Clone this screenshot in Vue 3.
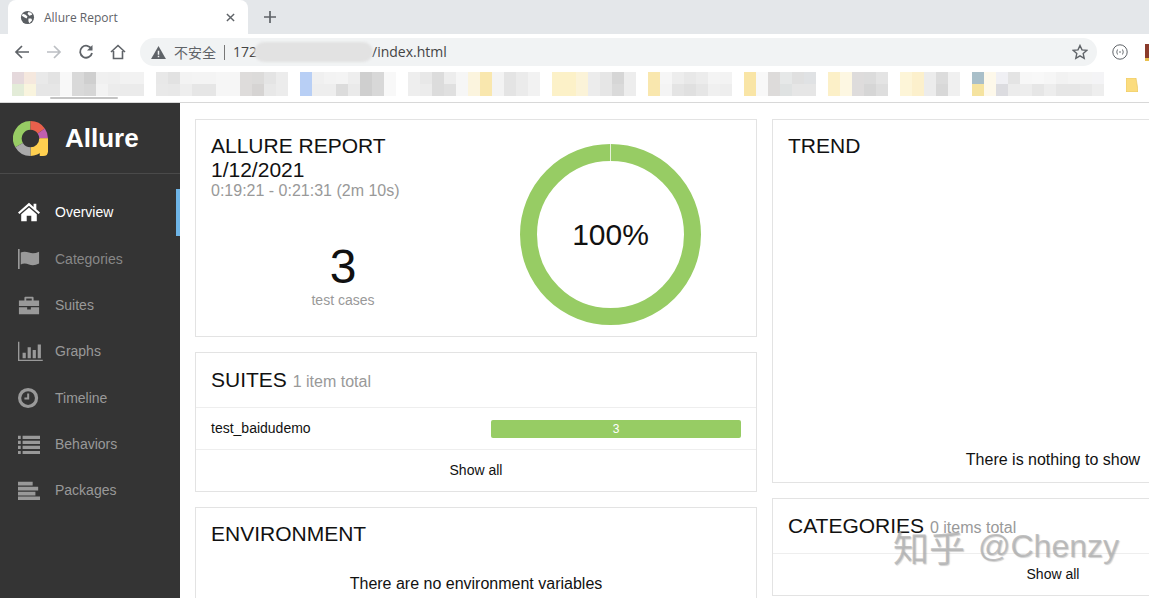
<script setup>
const bookmarkGroups = [
  ["e5d9dc/e3ecd8", "f5e8de/f9f4de", "e9e9e9/e6e6e6", "e3e3e3/e6e6e6", "f8f8f8/f8f8f8", "d9d9d9/d9d9d9", "cfcfcf/d6d6d6", "f0f0f0/f3f3f3", "efefef/ececec", "f2f2f2/ebebeb", "f2f2f2/ebebeb"],
  ["e8e8e8/e9e9e9", "e2e2e2/e8e8e8", "f3f3f3/eeeeee", "f4f4f4/e6e6e6", "f4f4f4/e6e6e6", "f6f6f6/f6f6f6", "f6f6f6/f6f6f6", "dedcdb/dedcdb", "dcdbda/d6d4d3", "e4e4e4/e8e8e8", "ececec/ececec"],
  ["b8cff5/b8cff5", "f0f0f0/eeeeee", "f3f3f3/eeeeee", "f4f4f4/dcdcdc", "eeeeee/eaeaea", "cfcfcf/cfcfcf", "d8d8d8/d8d8d8", "f8f8f8/f8f8f8"],
  ["eeeeee/eeeeee", "e8e8e8/ececec", "dcdcdc/dcdcdc", "ededed/e0e0e0", "f6f6f6/f6f6f6", "fbf4de/fbf4de", "f9e7ae/f9e7ae", "f3f3f3/f3f3f3", "e4e4e4/e4e4e4", "ebebeb/ebebeb", "f2f2f2/f2f2f2"],
  ["fcf1c8/fcf1c8", "fcf1c8/fcf1c8", "fbf3d8/fbf3d8", "ececec/ececec", "e6e6e6/e6e6e6", "d6d6d6/dadada", "ededed/ededed"],
  ["f9e7ae/f9e7ae", "f6f6f6/f4f4f4", "ededed/e4e4e4", "e8e8e8/e0e0e0", "ececec/e6e6e6", "f4f4f4/f0f0f0", "f3f3f3/eeeeee"],
  ["f9e5a6/f9e5a6", "f8f8f8/f8f8f8", "dddbda/dddbda", "e6e8e8/dfe2e2", "e0e0e0/e6e6e6", "e0e2e4/e6e6e6"],
  ["fcf0c8/fcf0c8", "fdf7e2/fdf7e2", "dedcdc/dedcdc", "dcdcdc/d6d6d6", "e4e4e4/dedede"],
  ["fdf5d8/fdf5d8", "fcf0cc/fcf0cc", "ececec/ececec", "dcdcdc/d8d8d8", "f0f0f0/f0f0f0"],
  ["a9bfc9/f5e3a0", "fdf8ea/fdf8ea", "f0f0f4/dcdce0", "e4e4e4/ececec", "f7f7f7/ededed", "f8f8f8/e6e6e6", "f6f6f6/ededed", "f2f2f2/e6e6e6", "f4f4f4/e6e6e6", "f4f4f4/e8e8e8", "f4f4f6/eeeeee"],
];

const navItems = [
  { label: "Overview", icon: "home", active: true },
  { label: "Categories", icon: "flag" },
  { label: "Suites", icon: "case" },
  { label: "Graphs", icon: "chart" },
  { label: "Timeline", icon: "clock" },
  { label: "Behaviors", icon: "list" },
  { label: "Packages", icon: "bars" },
];
</script>

<template>
  <div class="page">
    <div class="tabstrip">
      <div class="tab">
        <svg class="favicon" viewBox="0 0 16 16">
          <circle cx="8" cy="8" r="7" fill="#5a5e62" />
          <path d="M3 4l3 1 2 2-1 2-2-1-3-2zM9 2l3 1 1 2-3 1-2-2zM9 9l3 0 1 2-3 3-1-2z" fill="#fff" />
        </svg>
        <span class="tab-title">Allure Report</span>
        <svg class="tab-close" viewBox="0 0 10 10">
          <path d="M1 1l8 8M9 1l-8 8" stroke="#5f6368" stroke-width="1.6" fill="none" />
        </svg>
      </div>
      <svg class="new-tab" viewBox="0 0 12 12">
        <path d="M6 0v12M0 6h12" stroke="#5f6368" stroke-width="1.7" fill="none" />
      </svg>
    </div>

    <div class="toolbar">
      <svg class="tool" viewBox="0 0 16 16">
        <path d="M15 8H2M8 2L2 8l6 6" stroke="#5f6368" stroke-width="1.7" fill="none" />
      </svg>
      <svg class="tool" viewBox="0 0 16 16">
        <path d="M1 8h13M8 2l6 6-6 6" stroke="#bcbfc3" stroke-width="1.7" fill="none" />
      </svg>
      <svg class="tool" viewBox="0 0 16 16">
        <path d="M13.5 5A6 6 0 1 0 14 9" stroke="#5f6368" stroke-width="1.8" fill="none" />
        <path d="M14.5 1v5.5H9z" fill="#5f6368" />
      </svg>
      <svg class="tool" viewBox="0 0 16 16">
        <path d="M1 8l7-6.5L15 8M3.5 7v7.5h9V7" stroke="#5f6368" stroke-width="1.6" fill="none" />
      </svg>
      <div class="omnibox">
        <svg class="warn" viewBox="0 0 16 14">
          <path d="M8 0l8 14H0z" fill="#5f6368" />
          <path d="M7.2 5h1.6v4.4H7.2zM7.2 10.4h1.6V12H7.2z" fill="#f1f3f4" />
        </svg>
        <span class="insecure">不安全</span>
        <span class="divider"></span>
        <span class="url">172</span>
        <span class="url-blur"></span>
        <span class="url">/index.html</span>
        <svg class="star" viewBox="0 0 16 16">
          <path d="M8 1.500l2 4.400 4.700.5-3.500 3.200 1 4.700L8 11.900l-4.200 2.400 1-4.700L1.300 6.400 6 5.900z" stroke="#5f6368" stroke-width="1.400" fill="none" />
        </svg>
      </div>
      <svg class="ext" viewBox="0 0 16 16">
        <circle cx="8" cy="8" r="7.200" stroke="#5f6368" stroke-width="1" fill="none" />
        <path d="M5.500 5.500Q4 8 5.500 10.500M10.500 5.500Q12 8 10.500 10.500M7 8h2" stroke="#5f6368" stroke-width="0.900" fill="none" />
      </svg>
      <span class="ext-color"></span>
    </div>

    <div class="bookmarks">
      <div v-for="(group, i) in bookmarkGroups" :key="i" class="mosaic">
        <span
          v-for="(cell, j) in group"
          :key="j"
          class="cell"
          :style="{ background: `linear-gradient(#${cell.split('/')[0]} 50%, #${cell.split('/')[1]} 50%)` }"
        ></span>
      </div>
      <svg class="folder" viewBox="0 0 12 14">
        <path d="M0 0h10l2 12v2H0z" fill="#fbdc7e" stroke="#e6c35c" stroke-width="0.600" />
      </svg>
      <span class="smudge"></span>
    </div>

    <div class="app">
      <aside class="side">
        <div class="brand">
          <svg class="logo" viewBox="0 0 36 36">
            <g fill="none" stroke-width="9">
              <path d="M6.300 24.750A13.500 13.500 0 0 1 18 4.500" stroke="#97cc64" />
              <path d="M18 4.500A13.500 13.500 0 0 1 29.060 10.250" stroke="#e8604c" />
              <path d="M29.060 10.250A13.500 13.500 0 0 1 31.500 18" stroke="#c15fb0" />
              <path d="M31.500 18A13.500 13.500 0 0 1 18 31.500" stroke="#ffd050" />
              <path d="M18 31.500A13.500 13.500 0 0 1 6.300 24.750" stroke="#aaaaaa" />
            </g>
            <path d="M27.500 18h8.500v13q0 5-5 5h-3.500z" fill="#ffd050" />
          </svg>
          <span class="brand-name">Allure</span>
        </div>
        <nav class="nav">
          <a v-for="item in navItems" :key="item.label" class="nav-item" :class="{ active: item.active, dim: item.icon === 'flag' }">
            <svg class="nav-icon" viewBox="0 0 24 24">
              <template v-if="item.icon === 'home'">
                <path d="M12 2L0 12.500l1.500 1.800L12 5.200l10.500 9.100 1.500-1.800-4-3.500V3h-3v3.500z" />
                <path d="M12 7L3.500 14.500V22h6v-6h5v6h6v-7.500z" />
              </template>
              <template v-else-if="item.icon === 'flag'">
                <path d="M0 1h1.800v22H0z" />
                <path d="M3 5q4-2 9 0t11-1v13q-6 3-11 1t-9 0z" />
              </template>
              <template v-else-if="item.icon === 'case'">
                <path d="M8 3h8a1 1 0 0 1 1 1v3h6v6H1V7h6V4a1 1 0 0 1 1-1zm1 2v2h6V5z" />
                <path d="M1 14.500h9V17h4v-2.500h9V22H1z" />
              </template>
              <template v-else-if="item.icon === 'chart'">
                <path d="M0 2h1.500v19.500H27V23H0z" />
                <path d="M5 14h3.500v6H5zM10.500 8h3.500v12h-3.500zM16 11h3.500v9H16zM21.500 5H25v15h-3.500z" />
              </template>
              <template v-else-if="item.icon === 'clock'">
                <path fill-rule="evenodd" d="M11 1a11 11 0 1 0 0 22 11 11 0 0 0 0-22zm0 3.500a7.500 7.500 0 1 1 0 15 7.500 7.500 0 0 1 0-15z" />
                <path d="M10 7h2.200v6.500H7v-2h3z" />
              </template>
              <template v-else-if="item.icon === 'list'">
                <path d="M0 3h3v3.500H0zM5 3h19v3.500H5zM0 8.500h3V12H0zM5 8.500h19V12H5zM0 14h3v3.500H0zM5 14h19v3.500H5zM0 19.500h3V23H0zM5 19.500h19V23H5z" />
              </template>
              <template v-else>
                <path d="M0 3h16v4H0zM0 8.500h22v4H0zM0 14h19v4H0zM0 19h24v4H0z" />
              </template>
            </svg>
            <span>{{ item.label }}</span>
          </a>
        </nav>
      </aside>

      <main class="content">
        <div class="column">
          <section class="card summary">
            <div class="summary-left">
              <h2 class="title">ALLURE REPORT<br />1/12/2021</h2>
              <div class="time">0:19:21 - 0:21:31 (2m 10s)</div>
              <div class="count">3</div>
              <div class="count-label">test cases</div>
            </div>
            <div class="summary-right">
              <div class="donut"><span>100%</span></div>
            </div>
          </section>

          <section class="card">
            <div class="head"><h2 class="title">SUITES <small>1 item total</small></h2></div>
            <div class="row">
              <span class="row-name">test_baidudemo</span>
              <div class="bar">3</div>
            </div>
            <div class="show-all">Show all</div>
          </section>

          <section class="card env">
            <h2 class="title">ENVIRONMENT</h2>
            <p class="empty">There are no environment variables</p>
          </section>
        </div>

        <div class="column">
          <section class="card trend">
            <h2 class="title">TREND</h2>
            <p class="nothing">There is nothing to show</p>
          </section>
          <section class="card">
            <div class="head"><h2 class="title">CATEGORIES <small>0 items total</small></h2></div>
            <div class="show-all">Show all</div>
          </section>
        </div>
      </main>
    </div>

    <div class="watermark"><span class="wm-cjk">知乎</span><span class="wm-latin">@Chenzy</span></div>
  </div>
</template>

<style scoped>
.page {
  position: relative;
  width: 1149px;
  height: 598px;
  overflow: hidden;
  font-family: "Liberation Sans", Arial, sans-serif;
  color: #111;
  background: #fff;
}

.tabstrip {
  display: flex;
  align-items: center;
  height: 34px;
  padding-left: 8px;
  background: #e4e7ea;
}

.tab {
  display: flex;
  align-items: center;
  box-sizing: border-box;
  width: 240px;
  height: 34px;
  padding: 0 12px;
  background: #fff;
  border-radius: 8px 8px 0 0;
}

.favicon {
  width: 15px;
  height: 15px;
}

.tab-title {
  flex: 1;
  margin-left: 9px;
  font-family: "Open Sans", sans-serif;
  font-size: 12px;
  color: #5f6368;
}

.tab-close {
  width: 9px;
  height: 9px;
  margin-right: 1px;
}

.new-tab {
  width: 12px;
  height: 12px;
  margin-left: 16px;
}

.toolbar {
  display: flex;
  align-items: center;
  box-sizing: border-box;
  height: 34px;
  padding: 2px 0 0 14px;
  background: #fff;
}

.tool {
  flex: none;
  width: 16px;
  height: 16px;
  margin-right: 16px;
}

.omnibox {
  display: flex;
  flex: none;
  align-items: center;
  box-sizing: border-box;
  width: 957px;
  height: 28px;
  margin-left: -2px;
  padding-left: 11px;
  background: #f1f3f4;
  border-radius: 14px;
}

.warn {
  width: 15px;
  height: 13px;
}

.insecure {
  margin-left: 8px;
  font-family: "Noto Sans CJK SC", sans-serif;
  font-size: 14px;
  color: #5f6368;
}

.divider {
  width: 1px;
  height: 15px;
  margin: 0 8px;
  background: #777;
}

.url {
  margin-bottom: 2px;
  font-family: "Open Sans", sans-serif;
  font-size: 14px;
  color: #444;
}

.url-blur {
  width: 119px;
  height: 20px;
  margin: 0 -1px 0 -3px;
  background: #e2e2e2;
  border-radius: 10px;
  filter: blur(1px);
}

.star {
  width: 16px;
  height: 16px;
  margin-left: auto;
  margin-right: 9px;
}

.ext {
  flex: none;
  width: 16px;
  height: 16px;
  margin-left: 15px;
}

.ext-color {
  flex: none;
  width: 6px;
  height: 17px;
  margin-left: 17px;
  background: linear-gradient(#8a3b2b 85%, #e8c050 85%);
}

.bookmarks {
  position: relative;
  display: flex;
  align-items: flex-start;
  gap: 12px;
  box-sizing: border-box;
  height: 35px;
  padding: 4px 0 0 12px;
  background: #fff;
  border-bottom: 1px solid #d8d8d8;
}

.mosaic {
  display: flex;
  filter: blur(0.5px);
}

.cell {
  width: 12px;
  height: 24px;
}

.folder {
  width: 12px;
  height: 14px;
  margin: 6px 0 0 10px;
}

.smudge {
  position: absolute;
  left: 50px;
  top: 29px;
  width: 68px;
  height: 2px;
  background: #c4c4c4;
  border-radius: 2px;
  filter: blur(0.5px);
}

.app {
  display: flex;
  height: 495px;
}

.side {
  flex: none;
  width: 180px;
  background: #343434;
}

.brand {
  display: flex;
  align-items: center;
  height: 70px;
  padding-left: 13px;
  border-bottom: 1px solid #4a4a4a;
}

.logo {
  width: 35px;
  height: 35px;
}

.brand-name {
  margin-left: 17px;
  font-size: 26px;
  font-weight: 700;
  color: #fff;
}

.nav {
  display: flex;
  flex-direction: column;
  padding-top: 15.3px;
}

.nav-item {
  display: flex;
  align-items: center;
  box-sizing: border-box;
  height: 46.33px;
  padding-left: 18px;
  font-size: 14px;
  color: #999;
}

.nav-item.dim {
  color: #888;
}

.nav-item.active {
  color: #fff;
  border-right: 4px solid #6eb4e6;
}

.nav-icon {
  flex: none;
  width: 22px;
  height: 22px;
  margin-right: 15px;
  fill: #999;
  overflow: visible;
}

.nav-item.active .nav-icon {
  fill: #fff;
}

.content {
  flex: none;
  display: flex;
  gap: 15px;
  padding: 16px 0 0 15px;
}

.column {
  display: flex;
  flex-direction: column;
  gap: 15px;
  width: 562px;
}

.card {
  flex: none;
  box-sizing: border-box;
  border: 1px solid #e3e3e3;
  background: #fff;
}

.title {
  margin: 0;
  font-size: 21px;
  font-weight: 400;
  line-height: 24px;
  color: #111;
}

.title small {
  font-size: 16px;
  color: #999;
}

.summary {
  display: flex;
  height: 218px;
}

.summary-left {
  flex: none;
  width: 279px;
  padding: 14px 0 0 15px;
  box-sizing: border-box;
}

.time {
  font-size: 16px;
  line-height: 18px;
  color: #999;
}

.count {
  margin-top: 41px;
  font-size: 48px;
  line-height: 51px;
  text-align: center;
}

.count-label {
  font-size: 14px;
  line-height: 16px;
  color: #999;
  text-align: center;
}

.summary-right {
  display: flex;
  padding: 24px 0 0 45px;
}

.donut {
  position: relative;
  display: flex;
  align-items: center;
  justify-content: center;
  box-sizing: border-box;
  width: 181px;
  height: 181px;
  border: 17px solid #97cc64;
  border-radius: 50%;
  font-size: 30px;
  color: #111;
}

/* thin gap where the arc starts */
.donut::before {
  content: "";
  position: absolute;
  left: 72.5px;
  top: -17px;
  width: 1px;
  height: 17px;
  background: #e6f2da;
}

.head {
  height: 55px;
  padding: 15px 15px 0;
  box-sizing: border-box;
  border-bottom: 1px solid #eee;
}

.row {
  display: flex;
  align-items: center;
  justify-content: space-between;
  box-sizing: border-box;
  height: 42px;
  padding: 0 15px;
  border-bottom: 1px solid #eee;
  font-size: 14px;
}

.row-name {
  margin-bottom: 2px;
}

.bar {
  width: 250px;
  height: 18px;
  background: #97cc64;
  border-radius: 2px;
  color: #fff;
  font-size: 12px;
  line-height: 18px;
  text-align: center;
}

.show-all {
  height: 41px;
  font-size: 14px;
  line-height: 41px;
  text-align: center;
}

.env {
  height: 120px;
  padding: 14px 15px;
}

.empty {
  margin: 29px 0 0;
  font-size: 16px;
  line-height: 18px;
  text-align: center;
}

.trend {
  display: flex;
  flex-direction: column;
  height: 364px;
  padding: 14px 15px 13px;
}

.nothing {
  margin: auto 0 0;
  font-size: 16px;
  line-height: 18px;
  text-align: center;
}

.watermark {
  position: absolute;
  left: 893px;
  top: 524px;
  display: flex;
  align-items: center;
  gap: 13px;
  height: 44px;
  white-space: nowrap;
  color: rgba(175, 175, 175, 0.75);
  text-shadow: 1px 1px 1px rgba(120, 120, 120, 0.35);
}

.wm-cjk {
  font-family: "Noto Sans CJK SC", sans-serif;
  font-size: 36px;
  line-height: 44px;
}

.wm-latin {
  font-family: "Liberation Sans", sans-serif;
  font-size: 32px;
  line-height: 44px;
}
</style>

<style>
html,
body {
  margin: 0;
  overflow: hidden;
}
</style>
